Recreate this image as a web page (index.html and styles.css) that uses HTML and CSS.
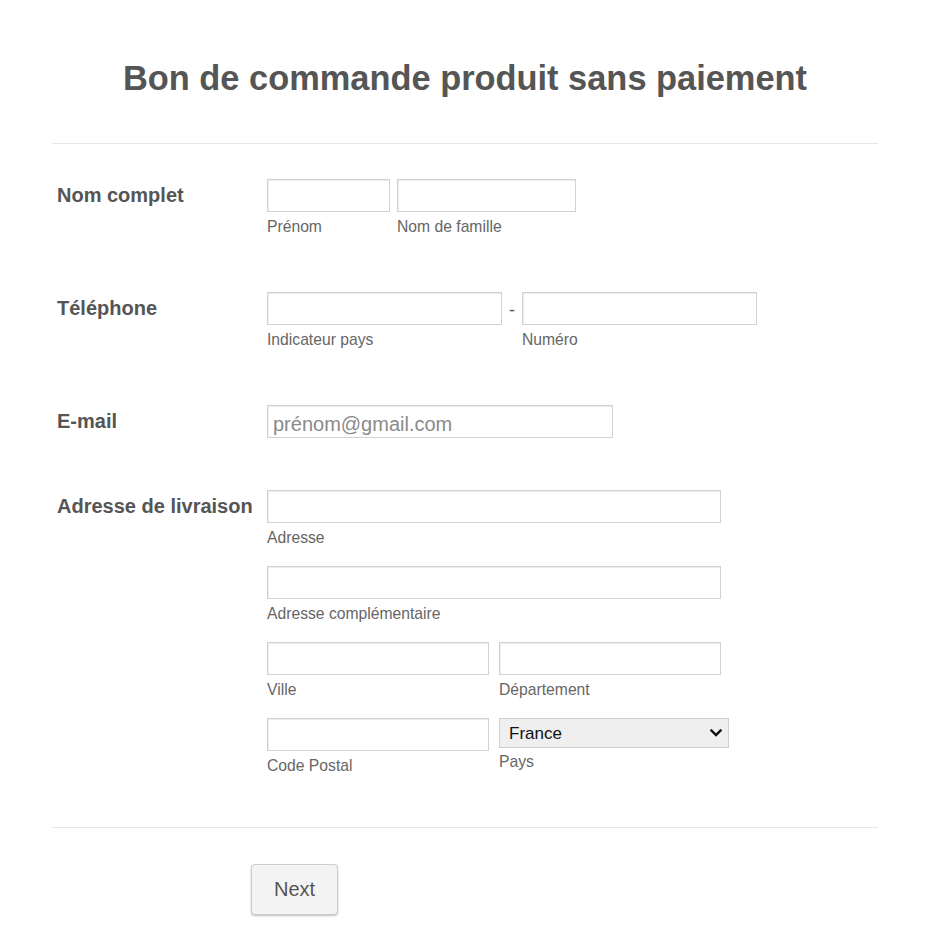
FILE: index.html
```html
<!DOCTYPE html>
<html lang="fr">
<head>
<meta charset="utf-8">
<title>Bon de commande produit sans paiement</title>
<link rel="stylesheet" href="styles.css">
</head>
<body>
<div class="form">
  <h1 class="title">Bon de commande produit sans paiement</h1>
  <div class="divider"></div>

  <div class="fields">
    <div class="row">
      <label class="label">Nom complet</label>
      <div class="controls">
        <div class="line">
          <div class="field">
            <input class="input w-first" type="text">
            <span class="sub">Prénom</span>
          </div>
          <div class="field">
            <input class="input w-last" type="text">
            <span class="sub">Nom de famille</span>
          </div>
        </div>
      </div>
    </div>

    <div class="row">
      <label class="label">Téléphone</label>
      <div class="controls">
        <div class="line line-phone">
          <div class="field">
            <input class="input w-phone" type="text">
            <span class="sub">Indicateur pays</span>
          </div>
          <span class="dash">-</span>
          <div class="field">
            <input class="input w-phone" type="text">
            <span class="sub">Numéro</span>
          </div>
        </div>
      </div>
    </div>

    <div class="row row-nosub">
      <label class="label">E-mail</label>
      <div class="controls">
        <input class="input input-email w-email" type="text" placeholder="prénom@gmail.com">
      </div>
    </div>

    <div class="row row-last">
      <label class="label">Adresse de livraison</label>
      <div class="controls stack">
        <div class="field">
          <input class="input w-addr" type="text">
          <span class="sub">Adresse</span>
        </div>
        <div class="field">
          <input class="input w-addr" type="text">
          <span class="sub">Adresse complémentaire</span>
        </div>
        <div class="line line-half">
          <div class="field">
            <input class="input w-half" type="text">
            <span class="sub">Ville</span>
          </div>
          <div class="field">
            <input class="input w-half" type="text">
            <span class="sub">Département</span>
          </div>
        </div>
        <div class="line line-half">
          <div class="field">
            <input class="input w-half" type="text">
            <span class="sub">Code Postal</span>
          </div>
          <div class="field">
            <div class="select-wrap">
              <select class="select">
                <option>France</option>
              </select>
              <svg class="chev" width="12" height="8" viewBox="0 0 12 8"><path d="M1.5 1.5 L6 6 L10.5 1.5" fill="none" stroke="#111" stroke-width="2.4" stroke-linecap="square"/></svg>
            </div>
            <span class="sub sub-select">Pays</span>
          </div>
        </div>
      </div>
    </div>
  </div>

  <div class="divider"></div>
  <div class="actions">
    <button class="btn" type="button">Next</button>
  </div>
</div>
</body>
</html>
```

FILE: styles.css
```css
html, body {
  margin: 0;
  padding: 0;
  background: #fff;
}
body {
  font-family: "Liberation Sans", Arial, Helvetica, sans-serif;
  color: #555;
}
.form {
  width: 826px;
  margin: 0 auto;
}
.title {
  margin: 0;
  padding: 58px 0 44px;
  font-size: 34.4px;
  line-height: 41px;
  font-weight: bold;
  text-align: center;
  color: #555;
}
.divider {
  height: 1px;
  background: #e6e6e6;
}
.fields {
  padding: 35px 0 48px;
}
.row {
  display: flex;
  padding-left: 5px;
  margin-bottom: 52px;
}
.row-last {
  margin-bottom: 0;
}
.label {
  width: 210px;
  flex: none;
  font-size: 20px;
  font-weight: bold;
  line-height: 33px;
  color: #555;
  white-space: nowrap;
}
.controls {
  display: flex;
  flex-direction: column;
}
.stack {
  gap: 15px;
}
.line {
  display: flex;
  gap: 7px;
}
.line-phone {
  gap: 0;
}
.line-half {
  gap: 10px;
}
.field {
  display: flex;
  flex-direction: column;
}
.input {
  box-sizing: border-box;
  height: 33px;
  margin: 0;
  padding: 0 5px;
  border: 1px solid #d2d2d2;
  box-shadow: inset 1px 1px 0 #ececec;
  background: #fff;
  font-family: "Liberation Sans", Arial, sans-serif;
  font-size: 20px;
  color: #555;
  outline: none;
}
.input-email {
  padding: 5px 5px 0;
}
.input-email::placeholder {
  color: #8a8a8a;
}
.w-first { width: 123px; }
.w-last { width: 179px; }
.w-phone { width: 235px; }
.w-email { width: 346px; }
.w-addr { width: 454px; }
.w-half { width: 222px; }
.dash {
  width: 20px;
  text-align: center;
  font-size: 18px;
  line-height: 36px;
  color: #555;
}
.sub {
  display: block;
  margin-top: 6px;
  height: 22px;
  font-size: 15.7px;
  line-height: 18px;
  color: #666;
  white-space: nowrap;
}
.sub-select {
  margin-top: 5px;
}
.select-wrap {
  position: relative;
  width: 230px;
}
.select {
  box-sizing: border-box;
  display: block;
  width: 230px;
  height: 30px;
  margin: 0;
  padding: 0 24px 0 9px;
  border: 1px solid #cfcfcf;
  border-radius: 0;
  background: #efefef;
  -webkit-appearance: none;
  appearance: none;
  font-family: "Liberation Sans", Arial, sans-serif;
  font-size: 17px;
  color: #111;
  outline: none;
}
.chev {
  position: absolute;
  right: 7px;
  top: 11px;
  pointer-events: none;
}
.actions {
  padding: 36px 0 40px 199px;
}
.btn {
  box-sizing: border-box;
  width: 87px;
  height: 51px;
  margin: 0;
  padding: 0;
  border: 1px solid #cdcdcd;
  border-radius: 4px;
  background: #f4f4f4;
  box-shadow: 0 1px 2px rgba(0, 0, 0, 0.25);
  font-family: "Liberation Sans", Arial, sans-serif;
  font-size: 20px;
  color: #555;
  cursor: pointer;
}
```
